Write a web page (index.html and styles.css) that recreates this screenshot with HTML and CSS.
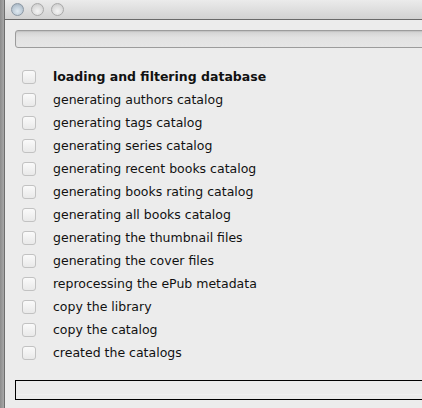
FILE: index.html
```html
<!DOCTYPE html>
<html>
<head>
<meta charset="utf-8">
<link rel="stylesheet" href="styles.css">
</head>
<body>
<div class="screen">
  <div class="behind"></div>
  <div class="window">
    <div class="titlebar">
      <span class="light light-close"></span>
      <span class="light"></span>
      <span class="light"></span>
    </div>
    <div class="content">
      <div class="field"></div>
      <ul class="steps">
        <li class="step active"><span class="box"></span><span class="label">loading and filtering database</span></li>
        <li class="step"><span class="box"></span><span class="label">generating authors catalog</span></li>
        <li class="step"><span class="box"></span><span class="label">generating tags catalog</span></li>
        <li class="step"><span class="box"></span><span class="label">generating series catalog</span></li>
        <li class="step"><span class="box"></span><span class="label">generating recent books catalog</span></li>
        <li class="step"><span class="box"></span><span class="label">generating books rating catalog</span></li>
        <li class="step"><span class="box"></span><span class="label">generating all books catalog</span></li>
        <li class="step"><span class="box"></span><span class="label">generating the thumbnail files</span></li>
        <li class="step"><span class="box"></span><span class="label">generating the cover files</span></li>
        <li class="step"><span class="box"></span><span class="label">reprocessing the ePub metadata</span></li>
        <li class="step"><span class="box"></span><span class="label">copy the library</span></li>
        <li class="step"><span class="box"></span><span class="label">copy the catalog</span></li>
        <li class="step"><span class="box"></span><span class="label">created the catalogs</span></li>
      </ul>
      <div class="status"></div>
    </div>
  </div>
</div>
</body>
</html>
```
FILE: styles.css
```css
html, body {
  margin: 0;
  padding: 0;
  overflow: hidden;
}
body {
  width: 422px;
  height: 408px;
  font-family: "DejaVu Sans", "Liberation Sans", sans-serif;
  font-size: 12.5px;
  color: #111;
}
.screen {
  display: flex;
  width: 422px;
  height: 408px;
  overflow: hidden;
}
.behind {
  width: 4px;
  flex: none;
  background: linear-gradient(to right, #8c8c8c, #a8a8a8);
  border-right: 1px solid #6e6e6e;
}
.window {
  width: 417px;
  flex: none;
  display: flex;
  flex-direction: column;
  background: #ececec;
  overflow: hidden;
}
.titlebar {
  height: 20px;
  flex: none;
  box-sizing: border-box;
  border-bottom: 1px solid #6a6a6a;
  background: linear-gradient(to bottom, #ebebeb, #d2d2d2);
  display: flex;
  align-items: center;
  gap: 7px;
  padding-left: 6px;
  padding-bottom: 1px;
}
.light {
  width: 13px;
  height: 13px;
  border-radius: 50%;
  box-sizing: border-box;
  border: 1px solid #a9a9a9;
  background: radial-gradient(circle at 50% 65%, #f4f4f4 0%, #dcdcdc 55%, #c4c4c4 100%);
}
.light-close {
  border-color: #8c98a4;
  background: radial-gradient(circle at 50% 65%, #e0eaf2 0%, #bccad6 55%, #9aa8b6 100%);
}
.content {
  flex: 1;
  padding: 10px 0 0 10px;
  display: flex;
  flex-direction: column;
  align-items: flex-start;
}
.field {
  width: 440px;
  height: 18px;
  flex: none;
  box-sizing: border-box;
  border: 1px solid #9c9c9c;
  border-radius: 3px;
  background: linear-gradient(to bottom, #d2d2d2, #e2e2e2 40%, #e6e6e6);
  box-shadow: inset 0 1px 1px rgba(0,0,0,0.08);
}
.steps {
  list-style: none;
  margin: 17px 0 0 0;
  padding: 0 0 0 7px;
}
.step {
  display: flex;
  align-items: center;
  height: 23px;
  gap: 17px;
}
.box {
  width: 14px;
  height: 14px;
  flex: none;
  box-sizing: border-box;
  border: 1px solid #c2c2c2;
  border-radius: 3px;
  background: linear-gradient(to bottom, #fafafa, #e9e9e9);
}
.label {
  white-space: nowrap;
  line-height: 16px;
}
.active .label {
  font-weight: bold;
}
.status {
  margin-top: 16px;
  width: 440px;
  height: 20px;
  flex: none;
  box-sizing: border-box;
  border-top: 1px solid #000;
  border-bottom: 1px solid #000;
  border-left: 1px solid #000;
  background: linear-gradient(to bottom, #ebebeb 0%, #ebebeb 70%, #f2f2f2 72%, #ebebeb 80%);
}
```
